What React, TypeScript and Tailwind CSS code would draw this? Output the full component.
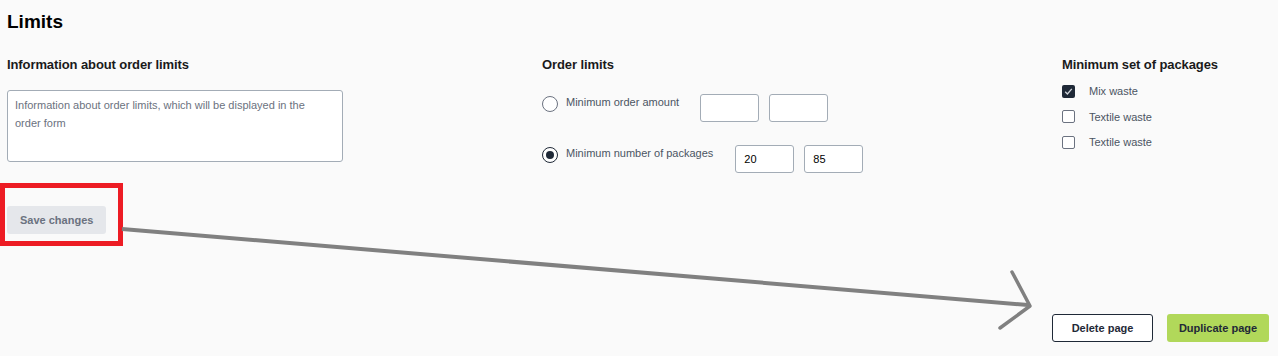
import { useState } from 'react';

type Pack = {
  id: number;
  name: string;
  checked: boolean;
};

const packs: Pack[] = [
  { id: 1, name: 'Mix waste', checked: true },
  { id: 2, name: 'Textile waste', checked: false },
  { id: 3, name: 'Textile waste', checked: false },
];

function Radio({ checked }: { checked: boolean }) {
  return (
    <span
      className={`mt-[2px] flex h-[16px] w-[16px] shrink-0 items-center justify-center rounded-full border bg-white ${
        checked ? 'border-[#1f2937]' : 'border-[#6b7280]'
      }`}
    >
      {checked && <span className="h-[8px] w-[8px] rounded-full bg-[#1f2937]" />}
    </span>
  );
}

function SmallInput({ value }: { value: string }) {
  return (
    <input
      defaultValue={value}
      className="h-[28px] w-[59px] rounded-[3px] border border-[#a3acb6] bg-white px-[8px] text-[11px] text-black outline-none"
    />
  );
}

export default function App() {
  const [mode] = useState<'amount' | 'packages'>('packages');

  return (
    <div className="relative flex h-[356px] w-full flex-col overflow-hidden bg-[#fafafa] font-['Liberation_Sans',Arial,sans-serif] text-[#1a1a1a]">
      <h1 className="px-[7px] pt-2 text-[19px] font-bold leading-7 text-black">Limits</h1>

      <div className="mt-[19px] flex">
        {/* info column */}
        <div className="flex w-[542px] shrink-0 flex-col items-start pl-[7px]">
          <h2 className="text-[13px] font-bold leading-5 tracking-[-0.1px]">Information about order limits</h2>
          <textarea
            placeholder="Information about order limits, which will be displayed in the order form"
            className="mt-[15px] h-[72px] w-[336px] resize-none rounded-[3px] border border-[#a3acb6] bg-white py-[5px] pl-[7px] pr-[24px] text-[11px] leading-[18px] text-black outline-none placeholder:text-[#6b7280]"
          />
          <button className="mt-[44px] h-[28px] rounded-[3px] bg-[#e5e7eb] px-[13px] text-[11px] font-bold text-[#6b7280]">
            Save changes
          </button>
        </div>

        {/* order limits */}
        <div className="flex w-[520px] shrink-0 flex-col">
          <h2 className="text-[13px] font-bold leading-5 tracking-[-0.1px]">Order limits</h2>
          <div className="mt-[19px] flex items-start">
            <Radio checked={mode === 'amount'} />
            <span className="ml-2 text-[11px] leading-4 text-[#4b5563]">Minimum order amount</span>
            <div className="ml-[21px] flex gap-[10px]">
              <SmallInput value="" />
              <SmallInput value="" />
            </div>
          </div>
          <div className="mt-[23px] flex items-start">
            <Radio checked={mode === 'packages'} />
            <span className="ml-2 text-[11px] leading-4 text-[#4b5563]">Minimum number of packages</span>
            <div className="ml-[22px] flex gap-[10px]">
              <SmallInput value="20" />
              <SmallInput value="85" />
            </div>
          </div>
        </div>

        {/* packages */}
        <div className="flex flex-1 flex-col">
          <h2 className="text-[13px] font-bold leading-5 tracking-[-0.1px]">Minimum set of packages</h2>
          <ul className="mt-2 flex flex-col gap-[9.5px]">
            {packs.map((p) => (
              <li key={p.id} className="flex h-4 items-center">
                {p.checked ? (
                  <span className="flex h-[13px] w-[13px] items-center justify-center rounded-[2px] bg-[#1f2937]">
                    <svg width="9" height="9" viewBox="0 0 9 9" fill="none">
                      <path d="M1.2 4.8 L3.4 7 L7.8 1.8" stroke="#d1d5db" strokeWidth="1.3" />
                    </svg>
                  </span>
                ) : (
                  <span className="h-[13px] w-[13px] rounded-[2px] border border-[#6b7280] bg-white" />
                )}
                <span className="ml-[14px] text-[11px] leading-4 text-[#4b5563]">{p.name}</span>
              </li>
            ))}
          </ul>
        </div>
      </div>

      <div className="mt-auto flex justify-end gap-[14px] pb-[14px] pr-[9px]">
        <button className="flex h-[28px] w-[101px] items-center justify-center rounded-[3px] border border-[#1f2937] bg-white text-[11px] font-bold text-[#1f2937]">
          Delete page
        </button>
        <button className="flex h-[28px] w-[102px] items-center justify-center rounded-[3px] bg-[#b1d85a] text-[11px] font-bold text-[#1f2937]">
          Duplicate page
        </button>
      </div>

      {/* annotation overlay */}
      <svg className="pointer-events-none absolute inset-0" width="1278" height="356">
        <rect x="2.5" y="185.5" width="118" height="58" fill="none" stroke="#ed1c24" strokeWidth="5" />
        <line x1="122" y1="229" x2="1028" y2="305" stroke="#808080" strokeWidth="4" />
        <polyline
          points="1012,272 1030,306 1000,328"
          fill="none"
          stroke="#808080"
          strokeWidth="3.5"
          strokeLinecap="round"
          strokeLinejoin="round"
        />
      </svg>
    </div>
  );
}
